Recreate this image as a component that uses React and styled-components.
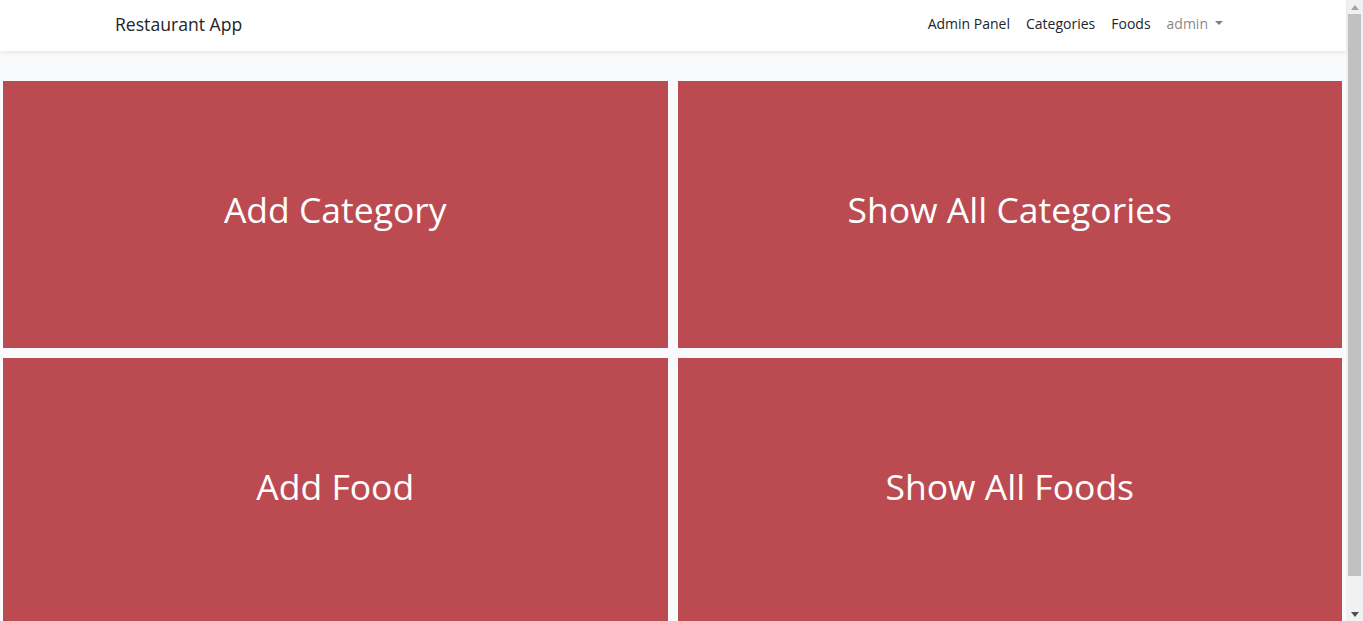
import React from "react";
import styled, { createGlobalStyle } from "styled-components";

const GlobalStyle = createGlobalStyle`
  html, body {
    margin: 0;
    padding: 0;
  }
  body {
    background: #f8fafc;
    font-family: "Open Sans", "Liberation Sans", sans-serif;
    font-size: 14.4px;
    color: #212529;
  }
`;

const Page = styled.div`
  display: flex;
  height: 100vh;
  overflow: hidden;
`;

const Content = styled.div`
  flex: 1;
  min-width: 0;
`;

// fake browser scrollbar, as in the screenshot
const ScrollTrack = styled.div`
  width: 17px;
  flex-shrink: 0;
  background: #f1f1f1;
  display: flex;
  flex-direction: column;
  align-items: center;
`;

const ScrollButton = styled.div`
  height: 14px;
  display: flex;
  align-items: center;
  justify-content: center;
  flex-shrink: 0;
`;

const ScrollThumb = styled.div`
  width: 13px;
  height: 562px;
  background: #c1c1c1;
`;

const Spacer = styled.div`
  flex: 1;
`;

const Nav = styled.nav`
  background: #fff;
  box-shadow: 0 2px 4px rgba(0, 0, 0, 0.075);
  height: 51px;
  display: flex;
  align-items: center;
  position: relative;
  z-index: 1;
`;

const NavContainer = styled.div`
  width: 1140px;
  margin: 0 auto;
  padding: 0 15px 4px;
  box-sizing: border-box;
  display: flex;
  align-items: center;
  justify-content: space-between;
`;

const Brand = styled.a`
  font-size: 17.6px;
  color: #212529;
  text-decoration: none;
  margin-left: -3px;
`;

const NavLinks = styled.ul`
  display: flex;
  list-style: none;
  margin: 0;
  padding: 0;
  margin-right: -3px;
`;

const NavLink = styled.a`
  display: flex;
  align-items: center;
  padding: 8px;
  font-size: 14px;
  color: ${(p) => (p.$muted ? "rgba(0, 0, 0, 0.5)" : "#212529")};
  text-decoration: none;
`;

const Caret = styled.span`
  display: inline-block;
  margin-left: 7px;
  border-top: 4.5px solid rgba(0, 0, 0, 0.5);
  border-left: 4.5px solid transparent;
  border-right: 4.5px solid transparent;
  margin-top: -2px;
`;

const Main = styled.main`
  padding: 30px 4px 25px 3px;
`;

const Grid = styled.div`
  display: grid;
  grid-template-columns: 1fr 1fr;
  gap: 10px;
`;

const Tile = styled.a`
  background: #bc4b51;
  height: 267px;
  display: flex;
  align-items: center;
  justify-content: center;
  color: #fff;
  font-size: 35.5px;
  text-decoration: none;
  padding-bottom: 11px;
  box-sizing: border-box;
`;

const tiles = ["Add Category", "Show All Categories", "Add Food", "Show All Foods"];

function Arrow({ up, color }) {
  return (
    <svg width="8" height="5" viewBox="0 0 8 5">
      <path d={up ? "M0 5 L4 0 L8 5 Z" : "M0 0 L8 0 L4 5 Z"} fill={color} />
    </svg>
  );
}

export default function App() {
  return (
    <Page>
      <GlobalStyle />
      <Content>
        <Nav>
          <NavContainer>
            <Brand href="#">Restaurant App</Brand>
            <NavLinks>
              <li><NavLink href="#">Admin Panel</NavLink></li>
              <li><NavLink href="#">Categories</NavLink></li>
              <li><NavLink href="#">Foods</NavLink></li>
              <li>
                <NavLink href="#" $muted>
                  admin
                  <Caret />
                </NavLink>
              </li>
            </NavLinks>
          </NavContainer>
        </Nav>
        <Main>
          <Grid>
            {tiles.map((t) => (
              <Tile key={t} href="#">{t}</Tile>
            ))}
          </Grid>
        </Main>
      </Content>
      <ScrollTrack>
        <ScrollButton>
          <Arrow up color="#a3a3a3" />
        </ScrollButton>
        <ScrollThumb />
        <Spacer />
        <ScrollButton>
          <Arrow color="#505050" />
        </ScrollButton>
      </ScrollTrack>
    </Page>
  );
}
